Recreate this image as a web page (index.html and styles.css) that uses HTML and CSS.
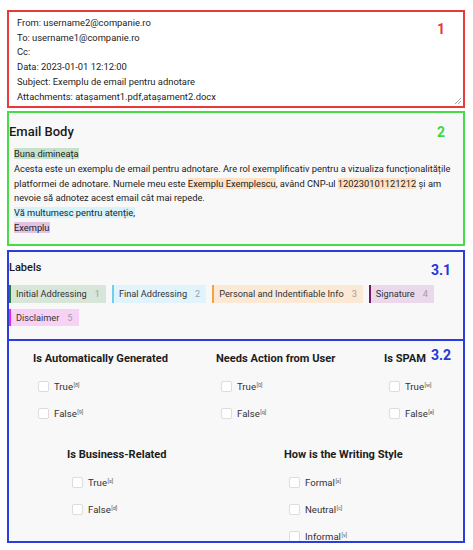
FILE: index.html
```html
<!DOCTYPE html>
<html lang="ro">
<head>
<meta charset="utf-8">
<title>Email annotation</title>
<link rel="stylesheet" href="styles.css">
</head>
<body>
<main class="page">
  <section class="box box-header">
    <div class="header-text">From: username2@companie.ro<br>To: username1@companie.ro<br>Cc:<br>Data: 2023-01-01 12:12:00<br>Subject: Exemplu de email pentru adnotare<br>Attachments: atașament1.pdf,atașament2.docx</div>
    <span class="badge badge-red badge-1">1</span>
    <svg class="grip" width="8" height="8" viewBox="0 0 8 8"><path d="M1 7 L7 1 M4 7 L7 4" stroke="#9a9a9a" stroke-width="0.9" fill="none"/></svg>
  </section>

  <section class="box box-body">
    <h2 class="body-title">Email Body</h2>
    <div class="body-text"><span class="hl hl-green">Buna dimineața</span><br>Acesta este un exemplu de email pentru adnotare. Are rol exemplificativ pentru a vizualiza funcționalitățile platformei de adnotare. Numele meu este <span class="hl hl-orange">Exemplu Exemplescu</span>, având CNP-ul <span class="hl hl-orange">120230101121212</span> și am nevoie să adnotez acest email cât mai repede.<br><span class="hl hl-cyan">Vă multumesc pentru atenție,</span><br><span class="hl hl-purple">Exemplu</span></div>
    <span class="badge badge-green badge-2">2</span>
  </section>

  <section class="box box-labels">
    <h3 class="labels-title">Labels</h3>
    <div class="chips">
      <span class="chip chip-1">Initial Addressing<span class="count">1</span></span>
      <span class="chip chip-2">Final Addressing<span class="count">2</span></span>
      <span class="chip chip-3">Personal and Indentifiable Info<span class="count">3</span></span>
      <span class="chip chip-4">Signature<span class="count">4</span></span>
      <span class="chip chip-5">Disclaimer<span class="count">5</span></span>
    </div>
    <span class="badge badge-blue badge-31">3.1</span>
  </section>

  <section class="box box-choices">
    <div class="q-row q-row-1">
      <div class="question">
        <div class="q-title">Is Automatically Generated</div>
        <div class="opt"><span class="cb"></span>True<sup>[8]</sup></div>
        <div class="opt"><span class="cb"></span>False<sup>[9]</sup></div>
      </div>
      <div class="question">
        <div class="q-title">Needs Action from User</div>
        <div class="opt"><span class="cb"></span>True<sup>[0]</sup></div>
        <div class="opt"><span class="cb"></span>False<sup>[q]</sup></div>
      </div>
      <div class="question">
        <div class="q-title">Is SPAM</div>
        <div class="opt"><span class="cb"></span>True<sup>[w]</sup></div>
        <div class="opt"><span class="cb"></span>False<sup>[e]</sup></div>
      </div>
    </div>
    <div class="q-row q-row-2">
      <div class="question">
        <div class="q-title">Is Business-Related</div>
        <div class="opt"><span class="cb"></span>True<sup>[s]</sup></div>
        <div class="opt"><span class="cb"></span>False<sup>[d]</sup></div>
      </div>
      <div class="question">
        <div class="q-title">How is the Writing Style</div>
        <div class="opt"><span class="cb"></span>Formal<sup>[x]</sup></div>
        <div class="opt"><span class="cb"></span>Neutral<sup>[c]</sup></div>
        <div class="opt"><span class="cb"></span>Informal<sup>[v]</sup></div>
      </div>
    </div>
    <span class="badge badge-blue badge-32">3.2</span>
  </section>
</main>
</body>
</html>
```

FILE: styles.css
```css
* { box-sizing: border-box; }

html, body {
  margin: 0;
  padding: 0;
  background: #ffffff;
}

body {
  font-family: Roboto, "Liberation Sans", Arial, sans-serif;
  color: #1f1f1f;
}

.page {
  display: flex;
  flex-direction: column;
  padding: 10px 8px 0 7px;
}

.box {
  position: relative;
  border: 2px solid;
  background: #f8f8f8;
}

.box-header {
  height: 98px;
  border-color: #e8393c;
  background: #ffffff;
  padding: 4px 8px 0 8px;
}

.header-text {
  font-size: 9.4px;
  line-height: 14.7px;
  color: #222;
}

.grip {
  position: absolute;
  right: 1px;
  bottom: 1px;
}

.box-body {
  margin-top: 3px;
  height: 135px;
  border-color: #47dc47;
  padding: 11px 0 0 0;
}

.body-title {
  margin: 0;
  font-size: 13px;
  line-height: 16px;
  font-weight: 500;
  color: #1a1a1a;
}

.body-text {
  margin: 7px 0 0 5px;
  font-size: 9.3px;
  line-height: 14.8px;
  color: #222;
}

.hl-green { background: #c7e2c8; }
.hl-orange { background: #fde1c4; }
.hl-cyan { background: #d4f3fa; }
.hl-purple { background: #e2c3e4; }

.box-labels {
  margin-top: 4px;
  height: 91px;
  border-color: #2b3ddf;
  padding: 9px 0 0 0;
}

.labels-title {
  margin: 0;
  font-size: 11px;
  line-height: 14px;
  font-weight: 500;
  color: #1a1a1a;
}

.chips {
  margin-top: 10px;
  display: flex;
  flex-wrap: wrap;
  gap: 6px 6px;
}

.chip {
  display: inline-flex;
  align-items: center;
  height: 17.5px;
  border-left: 2.5px solid;
  padding: 0 6px 0 5px;
  font-size: 9.2px;
  color: #333;
}

.count {
  margin-left: 8px;
  color: #a0a0a0;
}

.chip-1 { border-color: #2b7a32; background: #d8e5d9; }
.chip-2 { border-color: #6ccfee; background: #e1f4fb; }
.chip-3 { border-color: #f2a544; background: #fbe9d6; }
.chip-4 { border-color: #731a5f; background: #ebd8eb; }
.chip-5 { border-color: #e526e0; background: #f8d2f6; }

.box-choices {
  margin-top: -2px;
  height: 204px;
  border-color: #2b3ddf;
  overflow: hidden;
  padding-top: 10px;
}

.q-row {
  display: grid;
}

.q-row-1 {
  grid-template-columns: 183px 168px auto;
  padding-left: 24px;
}

.q-row-2 {
  grid-template-columns: 217px auto;
  padding-left: 58px;
  margin-top: 20px;
}

.q-title {
  font-size: 11.1px;
  line-height: 15px;
  font-weight: 700;
  color: #1d1d1d;
  white-space: nowrap;
  margin-bottom: 7px;
}

.opt {
  display: flex;
  align-items: center;
  height: 27px;
  padding-left: 5px;
  font-size: 9.6px;
  color: #333;
}

.cb {
  width: 11px;
  height: 11px;
  border: 1px solid #dcdcdc;
  border-radius: 2px;
  background: #fff;
  margin-right: 5px;
  flex: none;
}

.opt sup {
  font-size: 5.5px;
  color: #555;
  align-self: flex-start;
  margin-top: 8.5px;
  margin-left: 0.5px;
}

.badge {
  position: absolute;
  right: 7px;
  width: 30px;
  text-align: center;
  font-weight: 700;
  font-size: 14px;
  line-height: 16px;
}

.badge-red { color: #e53935; }
.badge-green { color: #3fd83f; }
.badge-blue { color: #2335dc; }

.badge-1 { top: 9px; }
.badge-2 { top: 10.5px; }
.badge-31 { top: 9.5px; }
.badge-32 { top: 6px; }
```
